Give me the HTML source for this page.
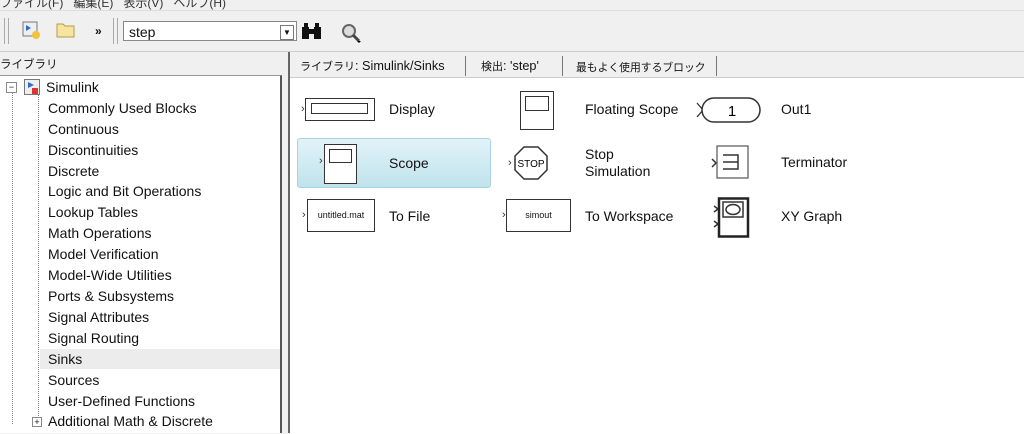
<!DOCTYPE html>
<html><head><meta charset="utf-8"><style>
body{margin:0;width:1024px;height:433px;overflow:hidden;background:#f0f0f0;font-family:"Liberation Sans","Noto Sans CJK JP",sans-serif;font-size:14px;color:#111;position:relative}
.a{position:absolute}
.tree div{position:absolute;left:48px;white-space:nowrap}
.lbl{position:absolute;font-size:14px;white-space:nowrap}
.box{position:absolute;border:1.5px solid #333;background:#fff;box-sizing:border-box}
.arr{position:absolute;font-size:11px;color:#333}
.j{font-size:11px}
</style></head><body>
<div class="a" style="left:0;top:-6px;font-size:12px;color:#333">ファイル(F)&nbsp;&nbsp;&nbsp;編集(E)&nbsp;&nbsp;&nbsp;表示(V)&nbsp;&nbsp;&nbsp;ヘルプ(H)</div>
<div class="a" style="left:0;top:10px;width:1024px;height:1px;background:#ddd"></div>
<div class="a" style="left:4px;top:18px;width:3px;height:26px;border-left:1px solid #aaa;border-right:1px solid #aaa"></div>
<svg class="a" style="left:22px;top:21px" width="20" height="20"><rect x="1" y="1" width="14" height="14" fill="#eee" stroke="#777"/><path d="M4 4l5 3-5 3z" fill="#2a6fc9"/><circle cx="14" cy="14" r="4" fill="#f3c33a"/></svg>
<svg class="a" style="left:56px;top:22px" width="20" height="16"><path d="M1 2h6l2 2h9v11H1z" fill="#f7e4a0" stroke="#b59b4a"/></svg>
<div class="a" style="left:95px;top:24px;font-weight:bold;font-size:12px">»</div>
<div class="a" style="left:113px;top:18px;width:3px;height:26px;border-left:1px solid #aaa;border-right:1px solid #aaa"></div>
<div class="a" style="left:123px;top:21px;width:174px;height:20px;background:#fff;border:1px solid #888;box-sizing:border-box"><span style="position:absolute;left:5px;top:2px;font-size:14px">step</span><span style="position:absolute;right:2px;top:3px;width:12px;height:13px;border:1px solid #777;font-size:8px;text-align:center;line-height:13px">▼</span></div>
<svg class="a" style="left:300px;top:21px" width="24" height="20"><path d="M2 6h7v12H2zM14 6h7v12h-7zM8 8h6v5H8zM4 2h4v4H4zM15 2h4v4h-4z" fill="#111"/></svg>
<svg class="a" style="left:340px;top:22px" width="24" height="22"><circle cx="9" cy="9" r="6" fill="#ddd" stroke="#666" stroke-width="2"/><path d="M13 13l6 6" stroke="#444" stroke-width="3"/><path d="M17 19l4 0-2 2z" fill="#000"/></svg>
<div class="a" style="left:0;top:51px;width:1024px;height:1px;background:#ccc"></div>
<div class="a" style="left:0;top:56px;font-size:11.5px">ライブラリ</div>
<div class="a" style="left:0;top:75px;width:282px;height:358px;background:#fff;border-top:1px solid #999;border-right:2px solid #555;box-sizing:border-box"></div>
<div class="a" style="left:288px;top:52px;width:2px;height:381px;background:#666"></div>
<div class="a" style="left:12px;top:84px;width:0;height:340px;border-left:1px dotted #888"></div>
<div class="a" style="left:38px;top:95px;width:0;height:327px;border-left:1px dotted #888"></div>
<div class="a" style="left:6px;top:82px;width:9px;height:9px;border:1px solid #888;background:#fff;font-size:9px;line-height:8px;text-align:center">−</div>
<svg class="a" style="left:24px;top:79px" width="16" height="16"><rect x=".5" y=".5" width="15" height="15" fill="#eee" stroke="#777"/><path d="M4 3l6 3-6 3z" fill="#2a6fc9"/><rect x="8" y="9" width="6" height="6" fill="#d33"/></svg>
<div class="a" style="left:46px;top:79px">Simulink</div>
<div class="a" style="left:40px;top:349px;width:240px;height:20px;background:#ececec"></div>
<div class="tree" style="position:absolute;left:0;top:0">
<div style="top:100px">Commonly Used Blocks</div>
<div style="top:121px">Continuous</div>
<div style="top:142px">Discontinuities</div>
<div style="top:163px">Discrete</div>
<div style="top:183px">Logic and Bit Operations</div>
<div style="top:204px">Lookup Tables</div>
<div style="top:225px">Math Operations</div>
<div style="top:246px">Model Verification</div>
<div style="top:267px">Model-Wide Utilities</div>
<div style="top:288px">Ports &amp; Subsystems</div>
<div style="top:309px">Signal Attributes</div>
<div style="top:330px">Signal Routing</div>
<div style="top:351px">Sinks</div>
<div style="top:372px">Sources</div>
<div style="top:393px">User-Defined Functions</div>
<div style="top:413px">Additional Math &amp; Discrete</div>
</div>
<div class="a" style="left:32px;top:417px;width:8px;height:8px;border:1px solid #888;background:#fff;font-size:9px;line-height:8px;text-align:center">+</div>
<div class="a" style="left:290px;top:77px;width:734px;height:356px;background:#fff;border-top:1px solid #ccc"></div>
<div class="a" style="left:300px;top:58px;font-size:12.7px"><span class="j">ライブラリ</span>: Simulink/Sinks</div>
<div class="a" style="left:465px;top:56px;width:1px;height:20px;background:#777"></div>
<div class="a" style="left:481px;top:58px;font-size:12.7px"><span class="j">検出</span>: 'step'</div>
<div class="a" style="left:562px;top:56px;width:1px;height:20px;background:#777"></div>
<div class="a" style="left:576px;top:59px;font-size:10.8px">最もよく使用するブロック</div>
<div class="a" style="left:716px;top:56px;width:1px;height:20px;background:#777"></div>
<div class="a" style="left:297px;top:138px;width:194px;height:50px;background:linear-gradient(#e2f3f8,#bfe3ec);border:1px solid #a8d4e2;border-radius:3px;box-sizing:border-box"></div>
<div class="box" style="left:305px;top:98px;width:70px;height:23px"><div style="position:absolute;left:5px;top:4px;width:55px;height:9px;border:1.5px solid #333"></div></div><div class="arr" style="left:301px;top:103px">›</div>
<div class="lbl" style="left:389px;top:101px">Display</div>
<div class="box" style="left:324px;top:144px;width:33px;height:40px"><div style="position:absolute;left:4px;top:4px;width:21px;height:12px;border:1.5px solid #333"></div></div><div class="arr" style="left:319px;top:155px">›</div>
<div class="lbl" style="left:389px;top:155px">Scope</div>
<div class="box" style="left:307px;top:199px;width:68px;height:33px;font-size:9px;text-align:center;line-height:30px">untitled.mat</div><div class="arr" style="left:302px;top:209px">›</div>
<div class="lbl" style="left:389px;top:208px">To File</div>
<div class="box" style="left:520px;top:91px;width:34px;height:39px"><div style="position:absolute;left:4px;top:4px;width:22px;height:13px;border:1.5px solid #333"></div></div>
<div class="lbl" style="left:585px;top:101px">Floating Scope</div>
<svg class="a" style="left:513px;top:145px" width="36" height="36"><path d="M11 2h14l9 9v14l-9 9H11l-9-9V11z" fill="#fff" stroke="#333" stroke-width="1.5"/><text x="18" y="22" font-size="10" text-anchor="middle" font-family="Liberation Sans">STOP</text></svg><div class="arr" style="left:508px;top:157px">›</div>
<div class="lbl" style="left:585px;top:146px;line-height:17px">Stop<br>Simulation</div>
<div class="box" style="left:506px;top:199px;width:65px;height:33px;font-size:9px;text-align:center;line-height:30px">simout</div><div class="arr" style="left:502px;top:209px">›</div>
<div class="lbl" style="left:585px;top:208px">To Workspace</div>
<svg class="a" style="left:696px;top:96px" width="70" height="28"><path d="M1 7l6 7-6 7" fill="none" stroke="#333" stroke-width="1.3"/><path d="M18 2h34a11 11 0 0 1 0 24H18a11 11 0 0 1 0-24z" fill="#fff" stroke="#333" stroke-width="1.5"/><text x="36" y="20" font-size="15" text-anchor="middle" font-family="Liberation Sans">1</text></svg>
<div class="lbl" style="left:781px;top:101px">Out1</div>
<svg class="a" style="left:711px;top:145px" width="40" height="36"><path d="M1 14l4 4-4 4" fill="none" stroke="#333" stroke-width="1.5"/><rect x="6" y="1" width="31" height="32" fill="#fff" stroke="#555" stroke-width="1.2"/><path d="M12 10h15v14H12M12 17h15" fill="none" stroke="#333" stroke-width="1.5"/></svg>
<div class="lbl" style="left:781px;top:154px">Terminator</div>
<svg class="a" style="left:713px;top:197px" width="40" height="42"><path d="M1 9l4 3-4 3M1 24l4 3-4 3" fill="none" stroke="#333" stroke-width="1.5"/><rect x="6" y="1.5" width="29" height="38" fill="#fff" stroke="#222" stroke-width="2.5"/><rect x="10" y="5" width="20" height="15" fill="#fff" stroke="#333" stroke-width="1.5"/><ellipse cx="20" cy="12.5" rx="7" ry="5" fill="none" stroke="#333" stroke-width="1.5"/></svg>
<div class="lbl" style="left:781px;top:208px">XY Graph</div>
</body></html>
